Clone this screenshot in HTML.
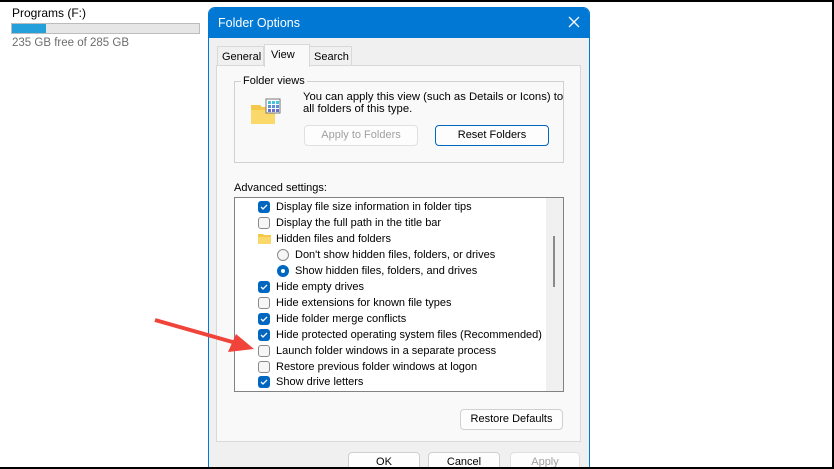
<!DOCTYPE html>
<html><head><style>
*{margin:0;padding:0;box-sizing:border-box}
html,body{width:834px;height:469px;overflow:hidden}
body{background:#fff;font-family:"Liberation Sans",sans-serif;font-size:11px;color:#000;position:relative}
.a{position:absolute}
.btn{position:absolute;border:1px solid #d0d0d0;border-radius:4px;background:#fdfdfd;text-align:center;line-height:19px;font-size:11px}
.cb{position:absolute;width:12px;height:12px;border-radius:3px}
.on{background:#0067c0;}
.off{border:1px solid #8a8a8a;background:#f6f6f6}
.t{position:absolute;white-space:nowrap}
</style></head><body>
<div class="t" style="left:12px;top:6px;font-size:12px">Programs (F:)</div>
<div class="a" style="left:11px;top:23px;width:189px;height:11px;background:#e6e6e6;border:1px solid #bcbcbc"></div>
<div class="a" style="left:12px;top:24px;width:34px;height:9px;background:#26a0da"></div>
<div class="t" style="left:12px;top:37px;color:#6d6d6d;font-size:11.5px">235 GB free of 285 GB</div>

<div class="a" style="left:208px;top:7px;width:382px;height:462px;background:#f0f0f0;border:1px solid #0078d4;border-radius:7px 7px 0 0;overflow:hidden">
 <div class="a" style="left:0;top:0;width:382px;height:30px;background:#0078d4"></div>
 <div class="t" style="left:9px;top:8px;color:#fff;font-size:12.5px">Folder Options</div>
 <svg class="a" style="left:359px;top:8px" width="12" height="12"><path d="M1 1L11 11M11 1L1 11" stroke="#fff" stroke-width="1.3"/></svg>
</div>
<div class="a" style="left:217px;top:46px;width:47px;height:20px;border:1px solid #d9d9d9;border-bottom:none;background:#f0f0f0"></div>
<div class="t" style="left:222px;top:51px">General</div>
<div class="a" style="left:309px;top:46px;width:43px;height:20px;border:1px solid #d9d9d9;border-bottom:none;background:#f0f0f0"></div>
<div class="t" style="left:314px;top:51px">Search</div>
<div class="a" style="left:216px;top:65px;width:365px;height:377px;border:1px solid #d9d9d9;background:#f9f9f9"></div>
<div class="a" style="left:264px;top:44px;width:46px;height:23px;border:1px solid #d9d9d9;border-bottom:none;background:#f9f9f9"></div>
<div class="t" style="left:271px;top:49px">View</div>
<div class="a" style="left:234px;top:81px;width:330px;height:82px;border:1px solid #d0d0d0"></div>
<div class="t" style="left:241px;top:75px;background:#f9f9f9;padding:0 2px">Folder views</div>
<svg class="a" style="left:250px;top:98px" width="32" height="30"><path d="M1 7h9l2 2h13v17H1z" fill="#f5c84c"/><path d="M1 12h24v14H1z" fill="#fbd86a"/><rect x="16" y="1" width="14" height="14" fill="#fff" stroke="#777"/><g><rect x="18" y="3" width="3" height="3" fill="#4ac3e0"/><rect x="22" y="3" width="3" height="3" fill="#4ac3e0"/><rect x="26" y="3" width="3" height="3" fill="#4ac3e0"/><rect x="18" y="7" width="3" height="3" fill="#5b8fd6"/><rect x="22" y="7" width="3" height="3" fill="#5b8fd6"/><rect x="26" y="7" width="3" height="3" fill="#5b8fd6"/><rect x="18" y="11" width="3" height="3" fill="#6a6fc8"/><rect x="22" y="11" width="3" height="3" fill="#6a6fc8"/><rect x="26" y="11" width="3" height="3" fill="#6a6fc8"/></g></svg>
<div class="t" style="left:303px;top:91px;font-size:11.3px">You can apply this view (such as Details or Icons) to</div>
<div class="t" style="left:303px;top:103px;font-size:11.3px">all folders of this type.</div>
<div class="btn" style="left:304px;top:125px;width:114px;height:21px;color:#a0a0a0;border-color:#e0e0e0">Apply to Folders</div>
<div class="btn" style="left:435px;top:125px;width:114px;height:21px;border-color:#0067c0">Reset Folders</div>
<div class="t" style="left:234px;top:182px">Advanced settings:</div>
<div class="a" style="left:234px;top:197px;width:330px;height:195px;border:1px solid #828282;background:#fff"></div>
<div class="a" style="left:546px;top:198px;width:17px;height:193px;background:#f0f0f0"></div>
<div class="a" style="left:553px;top:236px;width:2px;height:51px;background:#8a8a8a"></div>
<div class="cb on" style="left:258px;top:201px"></div><div class="t" style="left:276px;top:201px">Display file size information in folder tips</div>
<div class="cb off" style="left:258px;top:217px"></div><div class="t" style="left:276px;top:217px">Display the full path in the title bar</div>
<svg class="a" style="left:258px;top:233px" width="13" height="11"><path d="M0 1h5l1 1h7v9H0z" fill="#f5c84c"/><path d="M0 4h13v7H0z" fill="#fbd86a"/></svg><div class="t" style="left:276px;top:233px">Hidden files and folders</div>
<div class="a" style="left:277px;top:249px;width:12px;height:12px;border-radius:50%;border:1px solid #8a8a8a;background:#f6f6f6"></div><div class="t" style="left:295px;top:249px">Don't show hidden files, folders, or drives</div>
<div class="a" style="left:277px;top:265px;width:12px;height:12px;border-radius:50%;background:#0067c0"></div><div class="a" style="left:281px;top:269px;width:4px;height:4px;border-radius:50%;background:#fff"></div><div class="t" style="left:295px;top:265px">Show hidden files, folders, and drives</div>
<div class="cb on" style="left:258px;top:281px"></div><div class="t" style="left:276px;top:281px">Hide empty drives</div>
<div class="cb off" style="left:258px;top:297px"></div><div class="t" style="left:276px;top:297px">Hide extensions for known file types</div>
<div class="cb on" style="left:258px;top:313px"></div><div class="t" style="left:276px;top:313px">Hide folder merge conflicts</div>
<div class="cb on" style="left:258px;top:329px"></div><div class="t" style="left:276px;top:329px">Hide protected operating system files (Recommended)</div>
<div class="cb off" style="left:258px;top:345px"></div><div class="t" style="left:276px;top:345px">Launch folder windows in a separate process</div>
<div class="cb off" style="left:258px;top:361px"></div><div class="t" style="left:276px;top:361px">Restore previous folder windows at logon</div>
<div class="cb on" style="left:258px;top:376px"></div><div class="t" style="left:276px;top:376px">Show drive letters</div>
<svg class="a" style="left:0;top:0" width="834" height="469"><g stroke="#fff" stroke-width="1.3" fill="none">
<path d="M261 207l2 2 4-4M261 287l2 2 4-4M261 319l2 2 4-4M261 335l2 2 4-4M261 382l2 2 4-4"/></g>
<path d="M155 320L236 343" stroke="#f0433a" stroke-width="4"/><path d="M254 349L228 352L236 334z" fill="#f0433a"/></svg>
<div class="btn" style="left:460px;top:409px;width:103px;height:21px">Restore Defaults</div>
<div class="btn" style="left:348px;top:452px;width:72px;height:21px">OK</div>
<div class="btn" style="left:428px;top:452px;width:72px;height:21px">Cancel</div>
<div class="btn" style="left:510px;top:452px;width:70px;height:21px;color:#a0a0a0;border-color:#e0e0e0">Apply</div>
<div class="a" style="left:0;top:0;width:834px;height:2px;background:#000"></div>
<div class="a" style="left:0;top:467px;width:834px;height:2px;background:#000"></div>
<div class="a" style="left:832px;top:0;width:2px;height:469px;background:#000"></div>
</body></html>
